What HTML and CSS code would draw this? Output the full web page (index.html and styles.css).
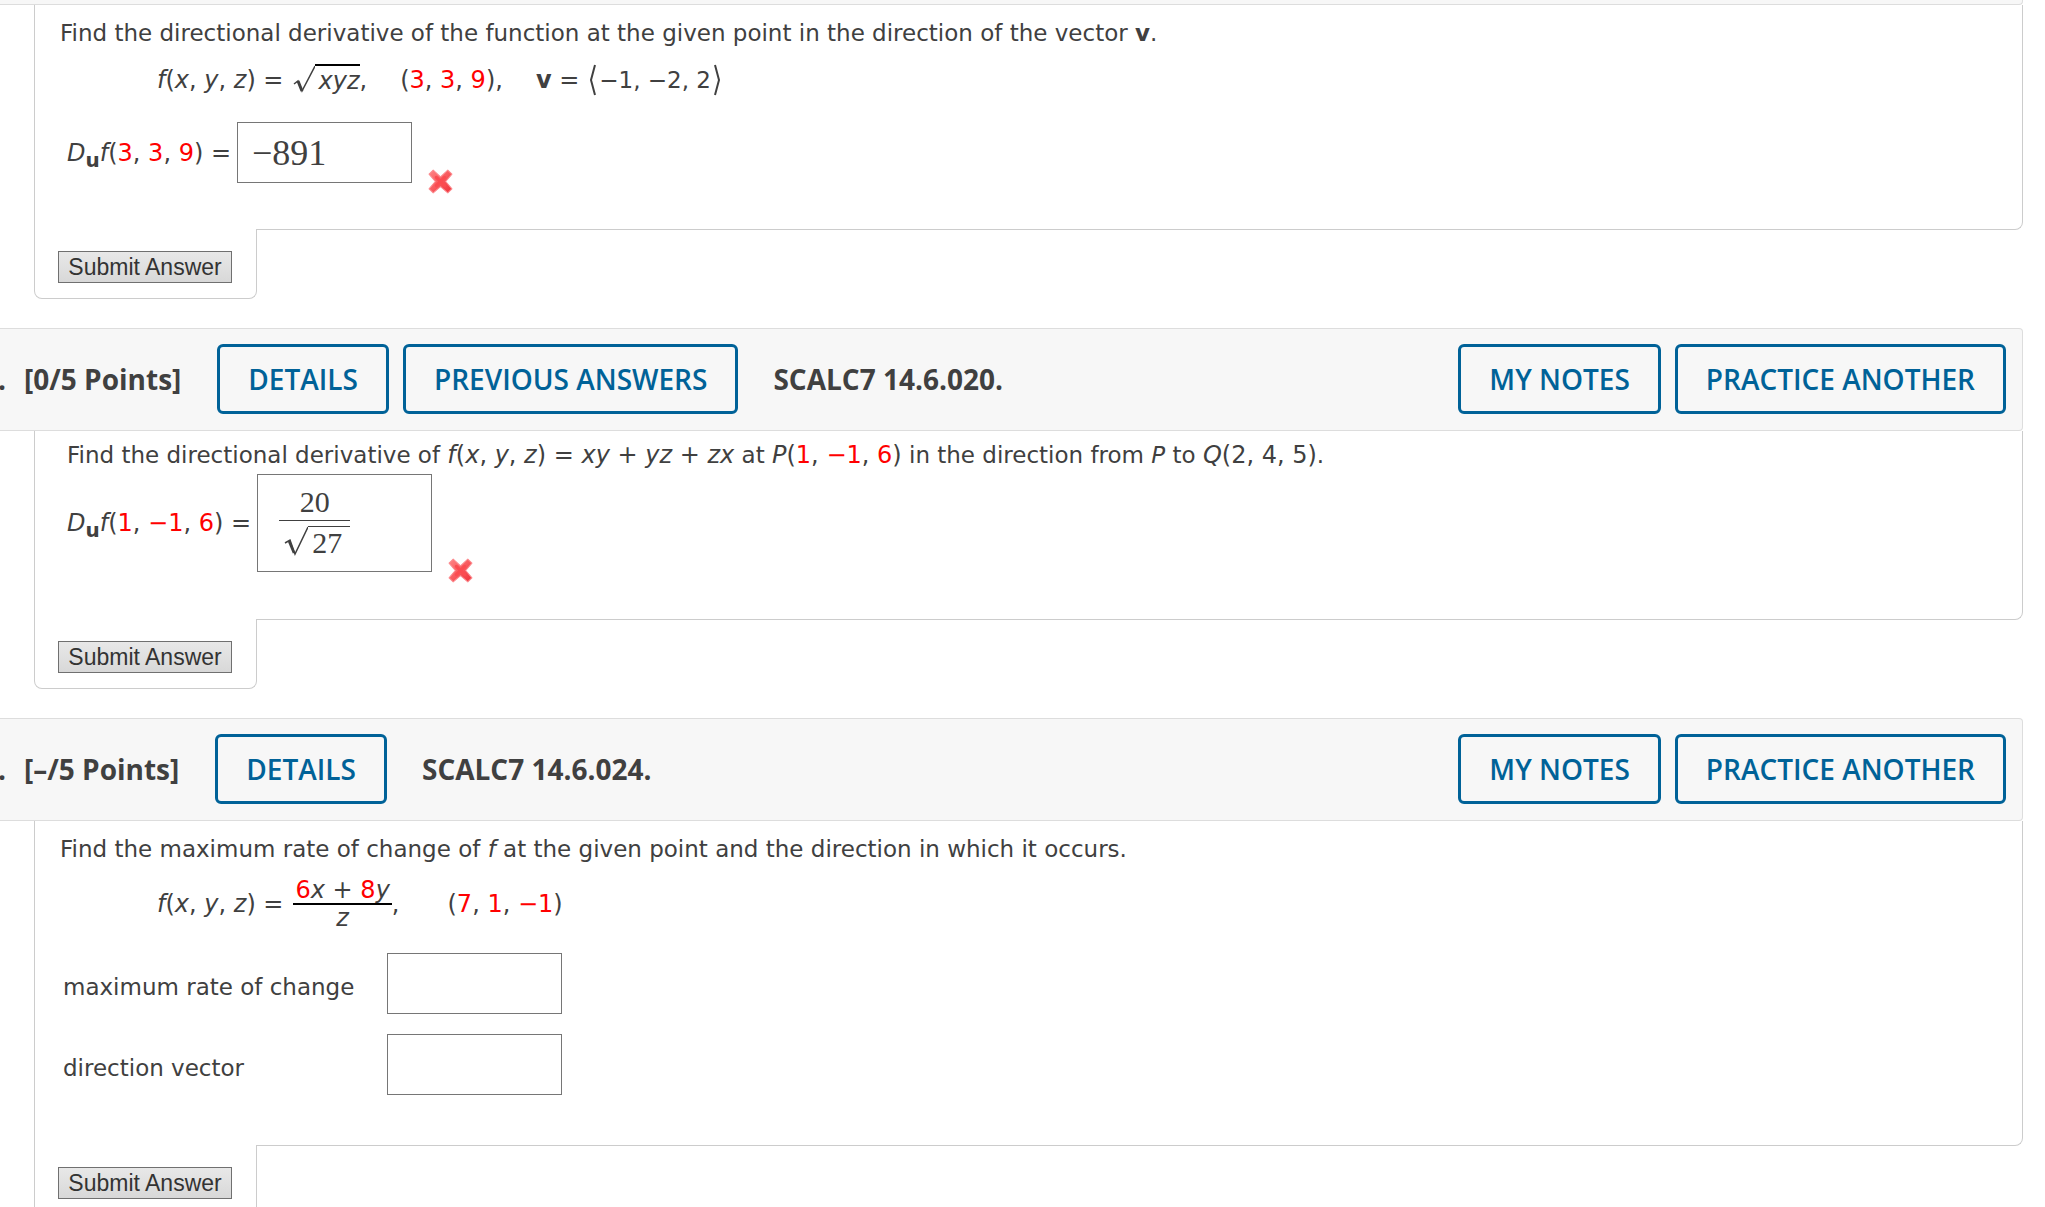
FILE: index.html
```
<!DOCTYPE html>
<html lang="en">
<head>
  <meta charset="UTF-8">
  <meta name="viewport" content="width=device-width, initial-scale=1.0">
  <title>Directional Derivatives</title>
  <link rel="stylesheet" href="styles.css">
</head>
<body>
  <!-- shared icons -->
  <svg class="defs" width="0" height="0" aria-hidden="true">
    <defs>
      <linearGradient id="redGrad" x1="0" y1="0" x2="1" y2="1">
        <stop offset="0" stop-color="#ff8585"/>
        <stop offset="1" stop-color="#f02f38"/>
      </linearGradient>
      <symbol id="wrong" viewBox="0 0 24 24">
        <path d="M5 1 L12 7.500 L19 1 L23 5 L17 12 L23 19 L19 23 L12 17 L5 23 L1 19 L7 12 L1 5 Z" fill="url(#redGrad)" stroke="#fc8c90" stroke-width="1" stroke-linejoin="round"/>
        <path d="M8 8 L16 16 M16 8 L8 16" stroke="#fb4b50" stroke-width="3" stroke-linecap="round"/>
      </symbol>
    </defs>
  </svg>

  <main>
    <section class="question">
      <div class="header header-end"></div>
      <div class="panel">
        <p class="text">Find the directional derivative of the function at the given point in the direction of the vector <b>v</b>.</p>
        <div class="equation">
          <span><i>f</i>(<i>x</i>, <i>y</i>, <i>z</i>) =</span>
          <span class="root">
            <svg width="22" height="30" viewBox="0 0 22 30"><path d="M1 19 L5 16 L9 26 L22 1" fill="none" stroke="#404040" stroke-width="1.500"/><path d="M5 16 L9 26" stroke="#404040" stroke-width="3"/></svg>
            <i class="radicand">xyz</i>,
          </span>
          <span class="point">(<em>3</em>, <em>3</em>, <em>9</em>),</span>
          <span><b>v</b> =</span>
          <span class="vector">
            <svg width="8" height="32" viewBox="0 0 8 32"><path d="M6 1 L2 16 L6 31" fill="none" stroke="#404040" stroke-width="2"/></svg>
            −1, −2, 2
            <svg width="8" height="32" viewBox="0 0 8 32"><path d="M2 1 L6 16 L2 31" fill="none" stroke="#404040" stroke-width="2"/></svg>
          </span>
        </div>
        <div class="answer">
          <label for="ans1"><i>D</i><sub>u</sub><i>f</i>(<em>3</em>, <em>3</em>, <em>9</em>) =</label>
          <input type="text" class="box" id="ans1" value="−891">
          <svg class="mark" role="img" aria-label="Incorrect"><use href="#wrong"/></svg>
        </div>
      </div>
      <div class="submit"><button type="button">Submit Answer</button></div>
    </section>

    <section class="question">
      <div class="header">
        <span class="points"><span>.</span> [0/5 Points]</span>
        <button type="button" class="btn">DETAILS</button>
        <button type="button" class="btn">PREVIOUS ANSWERS</button>
        <span class="source">SCALC7 14.6.020.</span>
        <div class="right">
          <button type="button" class="btn">MY NOTES</button>
          <button type="button" class="btn">PRACTICE ANOTHER</button>
        </div>
      </div>
      <div class="panel compact">
        <p class="text indent">Find the directional derivative of <span class="math"><i>f</i>(<i>x</i>, <i>y</i>, <i>z</i>) = <i>xy</i> + <i>yz</i> + <i>zx</i></span> at <span class="math"><i>P</i>(<em>1</em>, <em>−1</em>, <em>6</em>)</span> in the direction from <i>P</i> to <span class="math"><i>Q</i>(2, 4, 5)</span>.</p>
        <div class="answer tall">
          <span id="lab2"><i>D</i><sub>u</sub><i>f</i>(<em>1</em>, <em>−1</em>, <em>6</em>) =</span>
          <div class="box" role="textbox" tabindex="0" aria-labelledby="lab2">
            <span class="frac">
              <span class="num">20</span>
              <span class="den">
                <svg width="24" height="30" viewBox="0 0 24 30"><path d="M1 17 L6 14 L11 28 L24 1" fill="none" stroke="#404040" stroke-width="1.500"/><path d="M5 15 L10 27" stroke="#404040" stroke-width="2.500"/></svg>
                <span class="under">27</span>
              </span>
            </span>
          </div>
          <svg class="mark" role="img" aria-label="Incorrect"><use href="#wrong"/></svg>
        </div>
      </div>
      <div class="submit"><button type="button">Submit Answer</button></div>
    </section>

    <section class="question">
      <div class="header">
        <span class="points"><span>.</span> [–/5 Points]</span>
        <button type="button" class="btn">DETAILS</button>
        <span class="source">SCALC7 14.6.024.</span>
        <div class="right">
          <button type="button" class="btn">MY NOTES</button>
          <button type="button" class="btn">PRACTICE ANOTHER</button>
        </div>
      </div>
      <div class="panel">
        <p class="text">Find the maximum rate of change of <i>f</i> at the given point and the direction in which it occurs.</p>
        <div class="equation with-frac">
          <span><i>f</i>(<i>x</i>, <i>y</i>, <i>z</i>) =</span>
          <span class="term">
            <span class="fraction">
              <span><em>6</em><i>x</i> + <em>8</em><i>y</i></span>
              <i>z</i>
            </span>,
          </span>
          <span class="point">(<em>7</em>, <em>1</em>, <em>−1</em>)</span>
        </div>
        <div class="fields">
          <label for="rate">maximum rate of change</label>
          <input type="text" class="box" id="rate">
          <label for="dir">direction vector</label>
          <input type="text" class="box" id="dir">
        </div>
      </div>
      <div class="submit"><button type="button">Submit Answer</button></div>
    </section>
  </main>
</body>
</html>
```

FILE: styles.css
```
* {
  box-sizing: border-box;
}

body {
  margin: 0;
  background: #fff;
  color: #404040;
  font-family: "DejaVu Sans", Verdana, sans-serif;
  font-size: 23px;
  line-height: 30px;
}

main {
  padding-right: 22px;
}

.defs {
  position: absolute;
}

.question {
  margin-bottom: 29px;
}

em {
  color: #f00;
  font-style: normal;
}

/* question header */
.header {
  display: flex;
  align-items: center;
  gap: 14px;
  padding: 15px 16px 16px 0;
  background: #f7f7f7;
  border: 1px solid #ddd;
  border-left: none;
  border-radius: 0 4px 4px 0;
  font-family: "Open Sans", sans-serif;
  font-size: 28px;
}

.header-end {
  height: 5px;
  padding: 0;
  border-top: none;
  border-radius: 0 0 4px 0;
}

.points,
.source {
  font-weight: 700;
  white-space: nowrap;
}

.points {
  display: flex;
  gap: 18px;
  margin-left: -2px;
  margin-right: 22px;
}

.source {
  margin-left: 21px;
}

.right {
  display: flex;
  gap: 14px;
  margin-left: auto;
}

.btn {
  padding: 0 28px;
  height: 70px;
  background: none;
  border: 3px solid #006298;
  border-radius: 6px;
  color: #006298;
  font: 600 28px "Open Sans", sans-serif;
  white-space: nowrap;
  cursor: pointer;
}

/* question body */
.panel {
  margin-left: 34px;
  padding: 13px 24px 46px 25px;
  border: 1px solid #ccc;
  border-top: none;
  border-radius: 0 0 8px 0;
}

.compact {
  padding-top: 9px;
  padding-bottom: 47px;
}

.text {
  margin: 0;
}

.indent {
  padding-left: 7px;
}

.math,
.equation,
.answer {
  font-size: 24px;
}

.equation {
  display: flex;
  align-items: center;
  height: 48px;
  padding: 0 0 0 97px;
  gap: 10px;
  margin-top: 8px;
}

.root,
.vector {
  display: flex;
  align-items: center;
}

.radicand {
  padding-left: 3px;
  border-top: 2px solid #000;
}

.point {
  margin: 0 23px;
}

.vector {
  gap: 2px;
  font-size: 23px;
}

.answer {
  display: flex;
  align-items: center;
  gap: 6px;
  margin-top: 18px;
  padding-left: 7px;
}

.answer sub {
  font-weight: 700;
  font-size: 20px;
  line-height: 0;
}

.box {
  width: 175px;
  height: 61px;
  padding: 0 14px;
  background: #fff;
  border: 1px solid #767676;
  border-radius: 0;
  color: #404040;
  font: 36px "Liberation Serif", serif;
}

.mark {
  align-self: flex-end;
  width: 25px;
  height: 25px;
  margin: 0 0 -11px 10px;
}

.tall {
  margin-top: 4px;
}

.tall .box {
  height: 98px;
  padding: 4px 21px;
}

.frac {
  display: inline-flex;
  flex-direction: column;
  font-size: 30px;
  line-height: 32px;
}

.num {
  padding-bottom: 2px;
  border-bottom: 1px solid #404040;
  text-align: center;
}

.den {
  display: flex;
  padding: 5px 0 0 5px;
}

.under {
  padding: 0 8px 0 4px;
  border-top: 1px solid #404040;
}

.with-frac {
  height: 58px;
  margin-top: 11px;
}

.term {
  display: flex;
  align-items: center;
}

.with-frac .point {
  margin-left: 38px;
}

.fraction {
  display: flex;
  flex-direction: column;
  text-align: center;
  line-height: 26px;
}

.fraction span {
  padding: 0 2px;
  border-bottom: 2px solid #000;
}

.fields {
  display: grid;
  grid-template-columns: 324px 175px;
  gap: 20px 0;
  align-items: center;
  margin-top: 20px;
  padding: 0 0 4px 3px;
}

.fields label {
  padding-top: 6px;
}

/* tab under the panel */
.submit {
  width: 223px;
  margin: -1px 0 0 34px;
  padding: 22px 0 15px 23px;
  background: #fff;
  border: 1px solid #ccc;
  border-top: none;
  border-radius: 0 0 8px 8px;
}

.submit button {
  display: block;
  width: 174px;
  height: 32px;
  padding: 0;
  background: linear-gradient(#e8e8e8, #d8d8d8);
  border: 1px solid #707070;
  border-radius: 0;
  color: #333;
  font: 23px "Liberation Sans", Arial, sans-serif;
}
```
